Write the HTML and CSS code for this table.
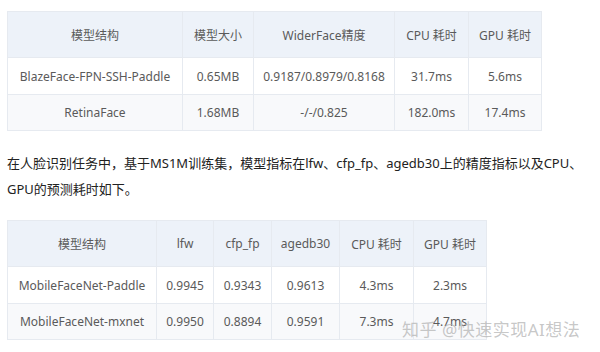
FILE: index.html
```html
<!DOCTYPE html>
<html lang="zh">
<head>
<meta charset="utf-8">
<link rel="stylesheet" href="styles.css">
</head>
<body>
<div class="page">
  <table class="tbl t1">
    <colgroup>
      <col class="w175"><col class="w71"><col class="w141"><col class="w74"><col class="w73">
    </colgroup>
    <thead>
      <tr><th>模型结构</th><th>模型大小</th><th>WiderFace精度</th><th>CPU 耗时</th><th>GPU 耗时</th></tr>
    </thead>
    <tbody>
      <tr class="r1"><td>BlazeFace-FPN-SSH-Paddle</td><td>0.65MB</td><td>0.9187/0.8979/0.8168</td><td>31.7ms</td><td>5.6ms</td></tr>
      <tr class="r2"><td>RetinaFace</td><td>1.68MB</td><td>-/-/0.825</td><td>182.0ms</td><td>17.4ms</td></tr>
    </tbody>
  </table>

  <p class="para">在人脸识别任务中，基于MS1M训练集，模型指标在lfw、cfp_fp、agedb30上的精度指标以及CPU、GPU的预测耗时如下。</p>

  <table class="tbl t2">
    <colgroup>
      <col class="w149"><col class="w57"><col class="w58"><col class="w68"><col class="w74"><col class="w73">
    </colgroup>
    <thead>
      <tr><th>模型结构</th><th>lfw</th><th>cfp_fp</th><th>agedb30</th><th>CPU 耗时</th><th>GPU 耗时</th></tr>
    </thead>
    <tbody>
      <tr class="r1"><td>MobileFaceNet-Paddle</td><td>0.9945</td><td>0.9343</td><td>0.9613</td><td>4.3ms</td><td>2.3ms</td></tr>
      <tr class="r2"><td>MobileFaceNet-mxnet</td><td>0.9950</td><td>0.8894</td><td>0.9591</td><td>7.3ms</td><td>4.7ms</td></tr>
    </tbody>
  </table>

  <div class="watermark">知乎 @快速实现AI想法</div>
</div>
</body>
</html>
```

FILE: styles.css
```css
html, body {
  margin: 0;
  padding: 0;
  background: #fff;
}
body {
  font-family: "Noto Sans", "Noto Sans CJK SC", sans-serif;
  color: #555;
}
.page {
  position: relative;
  width: 600px;
  height: 352px;
  padding: 11px 0 0 7px;
  box-sizing: border-box;
  overflow: hidden;
}
.tbl {
  border-collapse: collapse;
  table-layout: fixed;
  font-size: 12px;
  border: 1px solid #e6eaf0;
}
.t1 { width: 534px; }
.t2 { width: 479px; }
.tbl th, .tbl td {
  border: 1px solid #e6eaf0;
  text-align: center;
  padding: 0;
  white-space: nowrap;
  font-weight: normal;
  color: #5a5a5a;
}
.tbl thead tr {
  background: #edf2f9;
  height: 46px;
}
.tbl .r1 { background: #fff; height: 37px; }
.tbl .r2 { background: #f8f9fb; height: 36px; }
.w175 { width: 175px; }
.w71 { width: 71px; }
.w141 { width: 141px; }
.w74 { width: 74px; }
.w73 { width: 73px; }
.w149 { width: 149px; }
.w57 { width: 57px; }
.w58 { width: 58px; }
.w68 { width: 68px; }
.para {
  margin: 19px 0 18px 0;
  width: 590px;
  font-size: 13px;
  line-height: 26px;
  color: #222;
}
.watermark {
  position: absolute;
  left: 402px;
  top: 316px;
  font-size: 17px;
  color: rgba(175, 175, 175, 0.7);
  white-space: nowrap;
  letter-spacing: 0.5px;
}
```
